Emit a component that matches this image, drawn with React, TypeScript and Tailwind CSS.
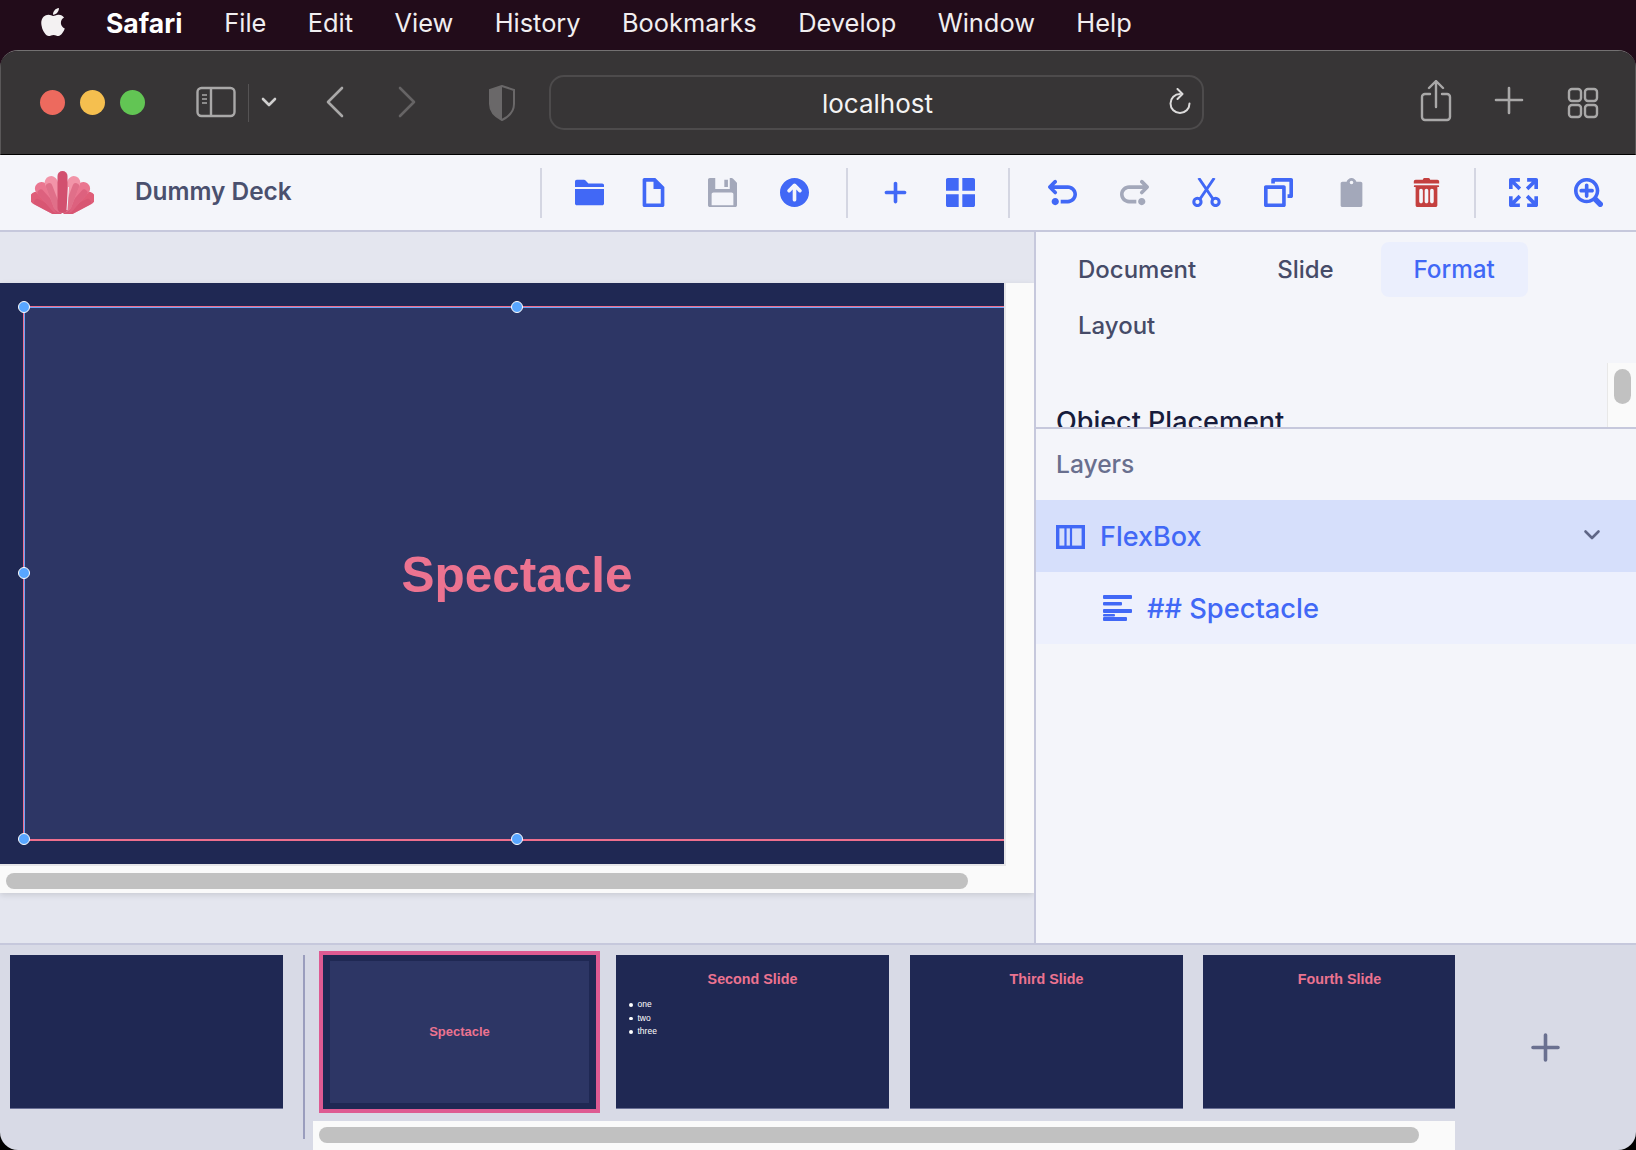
import { FaApple } from "react-icons/fa";

const menus = ["File", "Edit", "View", "History", "Bookmarks", "Develop", "Window", "Help"];

const BLUE = "#4168f6";
const GRAY = "#a3a8ba";
const RED = "#c4403f";

const paths: Record<string, string> = {
  folder:
    "M0 14c0 .55.45 1 1 1h14c.55 0 1-.45 1-1V6H0v8zM15 3H7.41L5.7 1.29A.997.997 0 005 1H1c-.55 0-1 .45-1 1v3h16V4c0-.55-.45-1-1-1z",
  doc: "M9 0H3c-.55 0-1 .45-1 1v14c0 .55.45 1 1 1h10c.55 0 1-.45 1-1V5L9 0zm3 14H4V2h4v4h4v8z",
  save: "M15.71 2.29l-2-2A.997.997 0 0013 0h-1v6H4V0H1C.45 0 0 .45 0 1v14c0 .55.45 1 1 1h14c.55 0 1-.45 1-1V3c0-.28-.11-.53-.29-.71zM14 15H2V9c0-.55.45-1 1-1h10c.55 0 1 .45 1 1v6zM11 1H9v4h2V1z",
  upload:
    "M8 0C3.58 0 0 3.58 0 8s3.58 8 8 8 8-3.58 8-8-3.58-8-8-8zm3.71 7.71a1.003 1.003 0 01-1.42 0L9 6.41V12c0 .55-.45 1-1 1s-1-.45-1-1V6.41L5.71 7.71a1.003 1.003 0 01-1.42-1.42l3-3C7.47 3.11 7.72 3 8 3s.53.11.71.29l3 3a1.003 1.003 0 010 1.42z",
  plus: "M13 7H9V3c0-.55-.45-1-1-1s-1 .45-1 1v4H3c-.55 0-1 .45-1 1s.45 1 1 1h4v4c0 .55.45 1 1 1s1-.45 1-1V9h4c.55 0 1-.45 1-1s-.45-1-1-1z",
  grid: "M0 1v6h7V0H1C.45 0 0 .45 0 1zm0 14c0 .55.45 1 1 1h6V9H0v6zM15 0H9v7h7V1c0-.55-.45-1-1-1zM9 16h6c.55 0 1-.45 1-1V9H9v7z",
  undo: "M4 11c-1.1 0-2 .9-2 2s.9 2 2 2 2-.9 2-2-.9-2-2-2zm7-7H3.41L4.7 2.71c.19-.18.3-.43.3-.71a1.003 1.003 0 00-1.71-.71l-3 3C.11 4.47 0 4.72 0 5c0 .28.11.53.29.71l3 3a1.003 1.003 0 001.42-1.42L3.41 6H11c1.66 0 3 1.34 3 3s-1.34 3-3 3H7v2h4c2.76 0 5-2.24 5-5s-2.24-5-5-5z",
  copy: "M15 0H5c-.55 0-1 .45-1 1v2h2V2h8v7h-1v2h2c.55 0 1-.45 1-1V1c0-.55-.45-1-1-1zm-4 4H1c-.55 0-1 .45-1 1v10c0 .55.45 1 1 1h10c.55 0 1-.45 1-1V5c0-.55-.45-1-1-1zm-1 10H2V6h8v8z",
  paste:
    "M13 2h-2.3C10.3 1 9.3 0 8 0S5.7 1 5.3 2H3c-.55 0-1 .45-1 1v12c0 .55.45 1 1 1h10c.55 0 1-.45 1-1V3c0-.55-.45-1-1-1zM8 1.5a1 1 0 110 2 1 1 0 010-2z",
  trash:
    "M14.49 3.99h-13c-.28 0-.5.22-.5.5s.22.5.5.5h.5v10c0 .55.45 1 1 1h10c.55 0 1-.45 1-1v-10h.5c.28 0 .5-.22.5-.5s-.22-.5-.5-.5zm-8.5 9c0 .55-.45 1-1 1s-1-.45-1-1v-6c0-.55.45-1 1-1s1 .45 1 1v6zm3 0c0 .55-.45 1-1 1s-1-.45-1-1v-6c0-.55.45-1 1-1s1 .45 1 1v6zm3 0c0 .55-.45 1-1 1s-1-.45-1-1v-6c0-.55.45-1 1-1s1 .45 1 1v6zm2-12h-4c0-.55-.45-1-1-1h-2c-.55 0-1 .45-1 1h-4c-.55 0-1 .45-1 1v1h14v-1c0-.55-.45-1-1-1z",
  zoom: "M7.99 5.99v-2c0-.55-.45-1-1-1s-1 .45-1 1v2h-2c-.55 0-1 .45-1 1s.45 1 1 1h2v2c0 .55.45 1 1 1s1-.45 1-1v-2h2c.55 0 1-.45 1-1s-.45-1-1-1h-2zm7.56 7.44l-2.67-2.68a6.94 6.94 0 001.11-3.76c0-3.87-3.13-7-7-7s-7 3.13-7 7 3.13 7 7 7c1.39 0 2.68-.42 3.76-1.11l2.68 2.67a1.498 1.498 0 102.12-2.12zm-8.56-1.44c-2.76 0-5-2.24-5-5s2.24-5 5-5 5 2.24 5 5-2.24 5-5 5z",
  full: "M1 0h5v2H3.41L6.7 5.29 5.29 6.7 2 3.41V6H0V1c0-.55.45-1 1-1zM15 0h-5v2h2.59L9.3 5.29l1.41 1.41L14 3.41V6h2V1c0-.55-.45-1-1-1zM1 16h5v-2H3.41L6.7 10.71 5.29 9.3 2 12.59V10H0v5c0 .55.45 1 1 1zM15 16h-5v-2h2.59L9.3 10.71l1.41-1.41L14 12.59V10h2v5c0 .55-.45 1-1 1z",
};

function Glyph({ name, color, mirror, size = 29 }: { name: string; color: string; mirror?: boolean; size?: number }) {
  return (
    <svg width={size} height={size} viewBox="0 0 16 16" fill={color} className={mirror ? "-scale-x-100" : ""}>
      <path fillRule="evenodd" d={paths[name]} />
    </svg>
  );
}

function ScissorsIcon() {
  return (
    <svg width="29" height="29" viewBox="0 0 16 16" fill="none" stroke={BLUE} strokeWidth="1.7">
      <circle cx="3" cy="13.2" r="2" />
      <circle cx="13" cy="13.2" r="2" />
      <path d="M4.4 11.6L12.3 0M11.6 11.6L3.7 0" strokeWidth="1.6" />
    </svg>
  );
}

// feathers fan out from the bottom centre of the logo
const feathers = [
  { angle: 62, length: 36, color: "#df5d78" },
  { angle: 42, length: 38, color: "#ea7690" },
  { angle: 21, length: 38, color: "#f294a8" },
];

function Logo() {
  return (
    <svg width="63" height="43" viewBox="0 0 63 43">
      {feathers.map((f) => (
        <g key={f.angle}>
          {[-1, 1].map((side) => (
            <g key={side} transform={`rotate(${side * f.angle} 31.5 41)`}>
              <rect x="25" y={41 - f.length} width="13" height={f.length} rx="6.5" fill={f.color} />
              <rect x={side > 0 ? 31.5 : 25} y={41 - f.length + 6} width="6.5" height={f.length - 6} rx="3" fill="#d2506f" opacity="0.55" />
            </g>
          ))}
        </g>
      ))}
      <rect x="26.5" y="0" width="10" height="42" rx="5" fill="#d2506f" />
      <path d="M37.5 16L36 39" stroke="#f4f5fa" strokeWidth="1" />
    </svg>
  );
}

function Handle({ className }: { className: string }) {
  return <span className={`absolute h-[12px] w-[12px] -translate-x-1/2 -translate-y-1/2 rounded-full border-[1.5px] border-white bg-[#58a6ff] ${className}`} />;
}

function Thumb({ title, items }: { title?: string; items?: string[] }) {
  return (
    <div className="h-[154px] w-[273px] shrink-0 overflow-hidden border-b border-[#6a7095] bg-[#1f2853] font-['Liberation_Sans',sans-serif]">
      {title && <p className="mt-[15px] text-center text-[14.3px] font-bold leading-[18px] text-[#ec7390]">{title}</p>}
      {items && (
        <ul className="mt-[10px] pl-[13px]">
          {items.map((item) => (
            <li key={item} className="flex h-[13.5px] items-center gap-[5px] text-[8.5px] text-white">
              <span className="h-[3.5px] w-[3.5px] rounded-full bg-white" />
              {item}
            </li>
          ))}
        </ul>
      )}
    </div>
  );
}

export default function App() {
  return (
    <div className="flex h-[1150px] w-[1636px] flex-col overflow-hidden bg-[linear-gradient(#220c1a_70px,#000_70px)] font-['Inter',sans-serif]">
      {/* macOS menu bar */}
      <div className="flex h-[50px] shrink-0 items-center pb-[4px] text-[25.4px] leading-none text-[#f1eef0]">
        <FaApple className="ml-[37px] mr-[37px] h-[32px] w-[32px] -translate-y-[1px] text-[#f3f1f2]" />
        <span className="mr-[42px] text-[26.5px] font-bold text-white">Safari</span>
        <div className="flex gap-[41.4px]">
          {menus.map((m) => (
            <span key={m}>{m}</span>
          ))}
        </div>
      </div>

      {/* browser window */}
      <div className="flex min-h-0 flex-1 flex-col overflow-hidden rounded-[18px] border-t border-[#737172]">
        <div className="flex h-[104px] shrink-0 items-center border-b border-black border-x border-x-[#5a5859] bg-[#373536]">
          <div className="ml-[39px] flex gap-[15px]">
            <span className="h-[25px] w-[25px] rounded-full bg-[#ed6a5e]" />
            <span className="h-[25px] w-[25px] rounded-full bg-[#f5bf4f]" />
            <span className="h-[25px] w-[25px] rounded-full bg-[#62c554]" />
          </div>
          <svg width="40" height="32" viewBox="0 0 40 32" fill="none" stroke="#a9a8a8" strokeWidth="2.4" className="ml-[51px] -translate-y-[1px]">
            <rect x="1.5" y="2" width="37" height="28" rx="4" />
            <path d="M15 2v28" />
            <path d="M6 9h5M6 13h5M6 17h5" strokeWidth="1.6" />
          </svg>
          <span className="ml-[12px] h-[38px] w-px bg-[#555354]" />
          <svg width="16" height="11" viewBox="0 0 16 11" fill="none" stroke="#d0cfcf" strokeWidth="2.6" strokeLinecap="round" strokeLinejoin="round" className="ml-[12px]">
            <path d="M2 2l6 6 6-6" />
          </svg>
          <svg width="20" height="32" viewBox="0 0 20 32" fill="none" stroke="#a9a8a8" strokeWidth="2.6" strokeLinecap="round" strokeLinejoin="round" className="ml-[48px] -translate-y-[1px]">
            <path d="M17 2L3 16l14 14" />
          </svg>
          <svg width="20" height="32" viewBox="0 0 20 32" fill="none" stroke="#666465" strokeWidth="2.6" strokeLinecap="round" strokeLinejoin="round" className="ml-[52px] -translate-y-[1px]">
            <path d="M3 2l14 14L3 30" />
          </svg>
          <svg width="28" height="36" viewBox="0 0 28 36" className="ml-[71px]">
            <path d="M14 1L2 5v14c0 8 6 13 12 16 6-3 12-8 12-16V5z" fill="none" stroke="#6a6869" strokeWidth="2" />
            <path d="M14 1L2 5v14c0 8 6 13 12 16z" fill="#6a6869" />
          </svg>
          <div className="relative ml-[33px] flex h-[55px] w-[655px] items-center justify-center rounded-[15px] border-2 border-[#4d4b4c] text-[26px] text-[#f4f3f3]">
            <span className="translate-x-[1px] translate-y-[1px]">localhost</span>
            <svg width="24" height="28" viewBox="0 0 24 28" fill="none" stroke="#dcdbdb" strokeWidth="2" strokeLinecap="round" strokeLinejoin="round" className="absolute right-[10px] top-[11px]">
              <path d="M12 6a9.5 9.5 0 109.5 9.5" />
              <path d="M9.5 1l5 5-5 5" />
            </svg>
          </div>
          <svg width="32" height="42" viewBox="0 0 32 42" fill="none" stroke="#a9a8a8" strokeWidth="2.4" strokeLinecap="round" strokeLinejoin="round" className="ml-[216px] -translate-y-[2px]">
            <path d="M10 14H5a3 3 0 00-3 3v20a3 3 0 003 3h22a3 3 0 003-3V17a3 3 0 00-3-3h-5" />
            <path d="M16 27V2M9 8l7-7 7 7" />
          </svg>
          <svg width="30" height="30" viewBox="0 0 30 30" fill="none" stroke="#a9a8a8" strokeWidth="2.6" strokeLinecap="round" className="ml-[42px] -translate-y-[3px]">
            <path d="M15 3v25M2 15h26" />
          </svg>
          <svg width="32" height="32" viewBox="0 0 32 32" fill="none" stroke="#a9a8a8" strokeWidth="2.4" className="ml-[43px]">
            <rect x="2" y="2" width="12" height="12" rx="3" />
            <rect x="18" y="2" width="12" height="12" rx="3" />
            <rect x="2" y="18" width="12" height="12" rx="3" />
            <rect x="18" y="18" width="12" height="12" rx="3" />
          </svg>
        </div>

        {/* app toolbar */}
        <div className="flex h-[77px] shrink-0 items-center border-b-2 border-[#c6c8dc] bg-[#f4f5fa]">
          <div className="ml-[31px]">
            <Logo />
          </div>
          <span className="ml-[41px] -translate-y-[1px] text-[24.4px] font-semibold text-[#4a506e]">Dummy Deck</span>
          <span className="ml-[248px] h-[50px] w-[2px] bg-[#d4d6e2]" />
          <div className="ml-[33px]"><Glyph name="folder" color={BLUE} /></div>
          <div className="ml-[35px]"><Glyph name="doc" color={BLUE} /></div>
          <div className="ml-[40px]"><Glyph name="save" color={GRAY} /></div>
          <div className="ml-[43px]"><Glyph name="upload" color={BLUE} /></div>
          <span className="ml-[37px] h-[50px] w-[2px] bg-[#d4d6e2]" />
          <div className="ml-[33px]"><Glyph name="plus" color={BLUE} /></div>
          <div className="ml-[36px]"><Glyph name="grid" color={BLUE} /></div>
          <span className="ml-[33px] h-[50px] w-[2px] bg-[#d4d6e2]" />
          <div className="ml-[38px]"><Glyph name="undo" color={BLUE} /></div>
          <div className="ml-[43px]"><Glyph name="undo" color={GRAY} mirror /></div>
          <div className="ml-[43px]"><ScissorsIcon /></div>
          <div className="ml-[43px]"><Glyph name="copy" color={BLUE} /></div>
          <div className="ml-[44px]"><Glyph name="paste" color={GRAY} /></div>
          <div className="ml-[46px]"><Glyph name="trash" color={RED} /></div>
          <span className="ml-[33px] h-[50px] w-[2px] bg-[#d4d6e2]" />
          <div className="ml-[33px]"><Glyph name="full" color={BLUE} /></div>
          <div className="ml-[36px]"><Glyph name="zoom" color={BLUE} /></div>
        </div>

        {/* canvas and side panel */}
        <div className="flex h-[711px] shrink-0">
          <div className="h-full w-[1034px] shrink-0 bg-[#e4e6ef] pt-[51px]">
            <div className="h-[610px] w-[1034px] bg-[#fafafa] shadow-[0_2px_6px_rgba(0,0,0,0.12)]">
              <div className="h-[581px] w-[1004px] bg-[#1f2853] pt-[23px] shadow-[1px_1px_0_1px_#e6e6e8]">
                <div className="relative ml-[23px] flex h-[535px] items-center justify-center border-b-2 border-l border-t border-[#ee6f8d] bg-[#2d3665] shadow-[inset_1px_1px_0_#6ea6f5]">
                  <span className="translate-x-[3px] translate-y-[2px] font-['Liberation_Sans',sans-serif] text-[49.5px] font-bold text-[#ec7390]">Spectacle</span>
                  <Handle className="left-0 top-0" />
                  <Handle className="left-[493px] top-0" />
                  <Handle className="left-0 top-[266px]" />
                  <Handle className="left-0 top-full" />
                  <Handle className="left-[493px] top-full" />
                </div>
              </div>
              <div className="ml-[6px] mt-[9px] h-[16px] w-[962px] rounded-full bg-[#c1c1c1]" />
            </div>
          </div>

          <div className="flex min-w-0 flex-1 flex-col border-l-2 border-[#c6c8dc] bg-[#f4f5fa]">
            <div className="relative h-[197px] shrink-0 overflow-hidden border-b-2 border-[#c6c8dc]">
              <div className="ml-[42px] mt-[10px] flex h-[55px] items-center text-[24px] font-medium text-[#464b68]">
                <span>Document</span>
                <span className="ml-[81px]">Slide</span>
                <span className="ml-[47px] flex h-[55px] w-[147px] items-center justify-center rounded-[8px] bg-[#ebeffd] text-[24.3px] text-[#4168f6]">Format</span>
              </div>
              <div className="ml-[42px] mt-[14px] text-[24px] font-medium leading-[29px] text-[#464b68]">Layout</div>
              <div className="ml-[20px] mt-[64px] text-[27px] font-medium leading-[36px] text-[#171c3c]">Object Placement</div>
              <div className="absolute bottom-0 right-0 h-[64px] w-[29px] border-l border-[#e8e8e8] bg-[#fafafa] pl-[6px] pt-[6px]">
                <div className="h-[35px] w-[17px] rounded-full bg-[#c1c1c1]" />
              </div>
            </div>
            <div className="ml-[20px] flex h-[71px] shrink-0 items-center text-[24.6px] font-medium text-[#696f8e]">Layers</div>
            <div className="flex h-[72px] shrink-0 items-center bg-[#d6dffb] pl-[20px] text-[27px] font-medium text-[#4168f6]">
              <svg width="29" height="24" viewBox="0 0 29 24" fill="none" stroke={BLUE} strokeWidth="3.4" className="translate-y-[1px]">
                <rect x="1.7" y="1.7" width="25.6" height="20.6" />
                <path d="M9.5 2v20M15 2v20" strokeWidth="2.2" />
              </svg>
              <span className="ml-[15px] translate-y-[1px]">FlexBox</span>
              <svg width="18" height="12" viewBox="0 0 18 12" fill="none" stroke="#5f6686" strokeWidth="2.6" strokeLinecap="round" strokeLinejoin="round" className="ml-auto mr-[35px] -translate-y-[1px]">
                <path d="M2.5 2.5L9 9l6.5-6.5" />
              </svg>
            </div>
            <div className="flex h-[72px] shrink-0 items-center bg-[#edf0fd] pl-[67px] text-[27.3px] font-medium text-[#4168f6]">
              <svg width="29" height="26" viewBox="0 0 29 26" fill={BLUE}>
                <rect x="0" y="0" width="29" height="4" rx="1" />
                <rect x="0" y="7" width="19" height="3.5" rx="1" />
                <rect x="0" y="14" width="29" height="4" rx="1" />
                <rect x="0" y="19" width="12" height="2.5" rx="1" />
                <rect x="0" y="22" width="24" height="4" rx="1" />
              </svg>
              <span className="ml-[15px] translate-y-[1px]">## Spectacle</span>
            </div>
          </div>
        </div>

        {/* slide strip */}
        <div className="flex min-h-0 flex-1 border-t-2 border-[#c6c8dc] bg-[#d8dae6]">
          <div className="ml-[10px] mt-[10px]">
            <Thumb />
          </div>
          <span className="ml-[20px] mt-[10px] h-[184px] w-[2px] bg-[#9a9dbd]" />
          <div className="ml-[8px] flex w-[1142px] shrink-0 flex-col overflow-hidden">
            <div className="flex h-[176px] items-start pl-[6px] pt-[6px]">
              <div className="flex h-[162px] w-[281px] shrink-0 flex-col justify-center border-[4px] border-[#de5a92] bg-[#1f2853] px-[7px]">
                <div className="flex h-[142px] items-center justify-center bg-[#2d3665] font-['Liberation_Sans',sans-serif] text-[13px] font-bold text-[#ec7390]">Spectacle</div>
              </div>
              <div className="ml-[16px] mt-[4px]">
                <Thumb title="Second Slide" items={["one", "two", "three"]} />
              </div>
              <div className="ml-[21px] mt-[4px]">
                <Thumb title="Third Slide" />
              </div>
              <div className="ml-[20px] mt-[4px]">
                <Thumb title="Fourth Slide" />
              </div>
            </div>
            <div className="flex-1 bg-[#fafafa] pl-[6px] pt-[6px]">
              <div className="h-[16px] w-[1100px] rounded-full bg-[#c1c1c1]" />
            </div>
          </div>
          <div className="flex flex-1 justify-center pt-[88px]">
            <svg width="29" height="29" viewBox="0 0 29 29" fill="none" stroke="#6a7090" strokeWidth="3.6" strokeLinecap="round" className="ml-[-1px]">
              <path d="M14.5 2v25M2 14.5h25" />
            </svg>
          </div>
        </div>
      </div>
    </div>
  );
}
